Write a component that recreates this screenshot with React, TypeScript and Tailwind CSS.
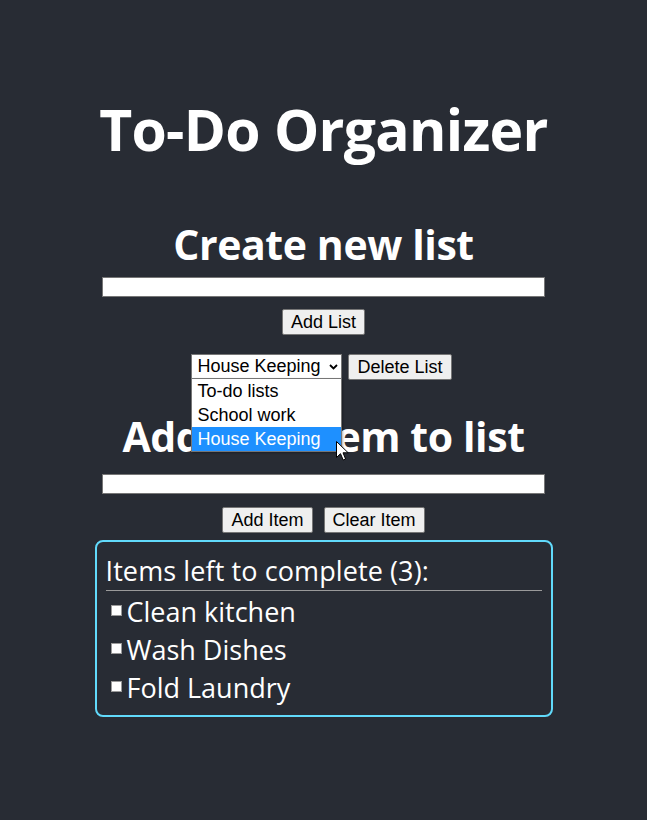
import React from "react";

const items = ["Clean kitchen", "Wash Dishes", "Fold Laundry"];
const lists = ["To-do lists", "School work", "House Keeping"];

const heading = "font-['Open_Sans',sans-serif] font-bold text-white";
const btn =
  "bg-[#efefef] border border-[#767676] rounded-[2px] px-[8px] h-[26px] text-[18px] leading-[22px] text-black font-['Liberation_Sans',Arial,sans-serif]";

function Cursor() {
  return (
    <svg
      width="13"
      height="21"
      viewBox="0 0 13 21"
      className="absolute left-[145px] top-[87px]"
    >
      <path
        d="M0.5 0.5 L0.5 16.5 L4.5 12.7 L7.2 19 L9.6 18 L7 11.8 L12.2 11.8 Z"
        fill="#fff"
        stroke="#000"
        strokeWidth="1"
        strokeLinejoin="round"
      />
    </svg>
  );
}

export default function App() {
  return (
    <div className="min-h-[820px] bg-[#282c34] flex flex-col items-center text-center">
      <h1 className={`${heading} text-[57px] leading-[60px] tracking-[-0.7px] mt-[99px]`}>
        To-Do Organizer
      </h1>

      <h2 className={`${heading} text-[41px] leading-[42px] tracking-[-0.4px] mt-[64px]`}>
        Create new list
      </h2>
      <input
        type="text"
        className="mt-[12px] w-[443px] h-[20px] bg-white border border-[#767676]"
      />
      <button className={`${btn} mt-[12px]`}>Add List</button>

      {/* list picker, shown with its popup open */}
      <div className="mt-[19px] mr-[4px] flex items-start gap-[6px] relative z-10">
        <div className="relative">
          <div className="w-[151px] h-[25px] bg-white border border-[#767676] flex items-center justify-between pl-[5px] pr-[3px] text-[18px] text-black font-['Liberation_Sans',Arial,sans-serif]">
            <span>House Keeping</span>
            <svg width="9" height="6" viewBox="0 0 9 6">
              <path d="M1 1 L4.5 4.5 L8 1" fill="none" stroke="#000" strokeWidth="1.8" />
            </svg>
          </div>
          <ul className="absolute left-0 top-[24px] w-[151px] bg-white border border-[#767676] text-left text-[18px] font-['Liberation_Sans',Arial,sans-serif] shadow-[1px_1px_2px_rgba(0,0,0,0.3)]">
            {lists.map((l) => (
              <li
                key={l}
                className={
                  l === "House Keeping"
                    ? "h-[24px] leading-[24px] pl-[5px] bg-[#1e90ff] text-white"
                    : "h-[24px] leading-[24px] pl-[5px] text-black"
                }
              >
                {l}
              </li>
            ))}
          </ul>
          <Cursor />
        </div>
        <button className={btn}>Delete List</button>
      </div>

      <h2 className={`${heading} text-[41px] leading-[42px] tracking-[-0.4px] mt-[35px]`}>
        Add new item to list
      </h2>
      <input
        type="text"
        className="mt-[17px] w-[443px] h-[20px] bg-white border border-[#767676]"
      />
      <div className="mt-[13px] flex gap-[11px]">
        <button className={btn}>Add Item</button>
        <button className={btn}>Clear Item</button>
      </div>

      <div className="mt-[7px] w-[458px] h-[177px] border-2 border-[#61dafb] rounded-[8px] px-[9px] pt-[10px] text-left text-white font-['Open_Sans',sans-serif]">
        <div className="text-[27px] leading-[38px] tracking-[0.1px] border-b border-[#9a9a9a]">
          Items left to complete (3):
        </div>
        <ul className="mt-[2px]">
          {items.map((it) => (
            <li key={it} className="flex items-center text-[27px] leading-[38px]">
              <span className="inline-block w-[11px] h-[11px] bg-white border border-[#999] ml-[5px] mr-[5px] -mt-[4px]" />
              {it}
            </li>
          ))}
        </ul>
      </div>
    </div>
  );
}
